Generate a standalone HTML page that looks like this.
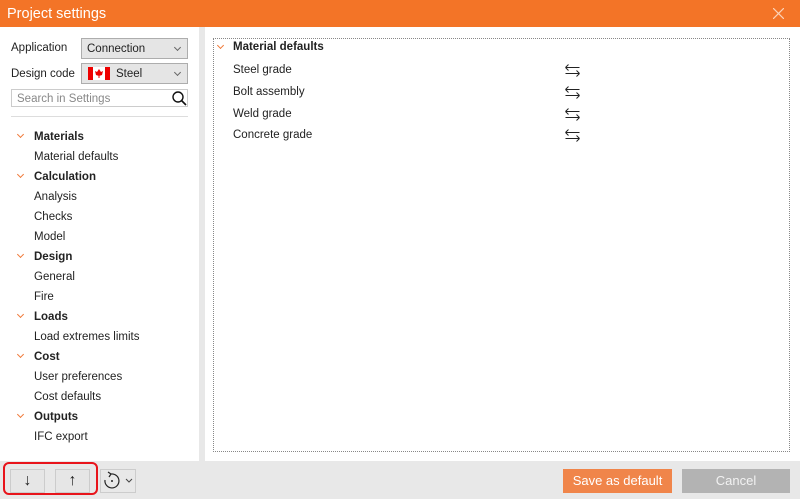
<!DOCTYPE html><html><head><style>
*{margin:0;padding:0;box-sizing:border-box}
body{width:800px;height:499px;overflow:hidden;font-family:"Liberation Sans",sans-serif;font-size:11.5px;color:#222;background:#e8e8e8;position:relative}
.a{position:absolute}
.title{left:0;top:0;width:800px;height:27px;background:#f37427;color:#fff;font-size:14.5px;padding:6px 0 0 7px}
.dd{background:#e5e5e5;border:1px solid #adadad;height:21px;padding:4px 0 0 5px}
.dd:after{content:"";position:absolute;right:7px;top:6px;width:4px;height:4px;border-right:1px solid #666;border-bottom:1px solid #666;transform:rotate(45deg)}
.chev{position:absolute;left:18px;width:5px;height:5px;border-right:1px solid #f07a3a;border-bottom:1px solid #f07a3a;transform:rotate(45deg)}
.b{font-weight:bold}
.btn{border:1px solid #ccc;background:#e6e6e6;height:24px;text-align:center;font-size:16px;line-height:22px}
</style></head><body>
<div class="a title">Project settings</div>
<svg class="a" style="left:773px;top:8px" width="11" height="11"><path d="M0 0L11 11M11 0L0 11" stroke="#fbd3b8" stroke-width="1.2"/></svg>
<div class="a" style="left:0;top:27px;width:199px;height:434px;background:#fff"></div>
<div class="a" style="left:205px;top:27px;width:595px;height:434px;background:#fff"></div>
<div class="a" style="left:11px;top:42px">Application</div>
<div class="a dd" style="left:81px;top:38px;width:107px">Connection</div>
<div class="a" style="left:11px;top:68px">Design code</div>
<div class="a dd" style="left:81px;top:63px;width:107px;padding-left:34px">Steel</div>
<svg class="a" style="left:88px;top:67px" width="22" height="13"><rect width="22" height="13" fill="#fff"/><rect width="5" height="13" fill="#e00"/><rect x="17" width="5" height="13" fill="#e00"/><path d="M11 2L13 5L15 4L14 8L11 9L8 8L7 4L9 5Z" fill="#e00"/><path d="M11 9V11" stroke="#e00"/></svg>
<div class="a" style="left:11px;top:89px;width:177px;height:18px;border:1px solid #ccc;color:#888;padding:3px 0 0 5px">Search in Settings</div>
<svg class="a" style="left:171px;top:90px" width="16" height="16"><circle cx="7" cy="7" r="5" fill="none" stroke="#111" stroke-width="1.4"/><path d="M10.5 10.5L15 15" stroke="#111" stroke-width="1.6"/></svg>
<div class="a" style="left:11px;top:116px;width:177px;height:1px;background:#ddd"></div>
<div class="a" style="left:0;top:131px;width:199px">
<div style="position:relative;height:20px"><i class="chev" style="top:1px"></i><span class="a b" style="left:34px;top:0">Materials</span></div>
<div style="position:relative;height:20px"><span class="a" style="left:34px">Material defaults</span></div>
<div style="position:relative;height:20px"><i class="chev" style="top:1px"></i><span class="a b" style="left:34px">Calculation</span></div>
<div style="position:relative;height:20px"><span class="a" style="left:34px">Analysis</span></div>
<div style="position:relative;height:20px"><span class="a" style="left:34px">Checks</span></div>
<div style="position:relative;height:20px"><span class="a" style="left:34px">Model</span></div>
<div style="position:relative;height:20px"><i class="chev" style="top:1px"></i><span class="a b" style="left:34px">Design</span></div>
<div style="position:relative;height:20px"><span class="a" style="left:34px">General</span></div>
<div style="position:relative;height:20px"><span class="a" style="left:34px">Fire</span></div>
<div style="position:relative;height:20px"><i class="chev" style="top:1px"></i><span class="a b" style="left:34px">Loads</span></div>
<div style="position:relative;height:20px"><span class="a" style="left:34px">Load extremes limits</span></div>
<div style="position:relative;height:20px"><i class="chev" style="top:1px"></i><span class="a b" style="left:34px">Cost</span></div>
<div style="position:relative;height:20px"><span class="a" style="left:34px">User preferences</span></div>
<div style="position:relative;height:20px"><span class="a" style="left:34px">Cost defaults</span></div>
<div style="position:relative;height:20px"><i class="chev" style="top:1px"></i><span class="a b" style="left:34px">Outputs</span></div>
<div style="position:relative;height:20px"><span class="a" style="left:34px">IFC export</span></div>
</div>
<div class="a" style="left:213px;top:38px;width:577px;height:414px;border:1px dotted #888"></div>
<i class="chev" style="left:218px;top:43px"></i>
<div class="a b" style="left:233px;top:41px">Material defaults</div>
<div class="a" style="left:233px;top:64px">Steel grade</div>
<div class="a" style="left:233px;top:86px">Bolt assembly</div>
<div class="a" style="left:233px;top:108px">Weld grade</div>
<div class="a" style="left:233px;top:129px">Concrete grade</div>
<svg class="a" style="left:564px;top:64px" width="17" height="80"><g stroke="#222" stroke-width="1" fill="none">
<path d="M1.5 3.5H15.5M1.5 3.5L4.5 0.5M1.5 3.5L4.5 6.5M1.5 9.5H15.5M15.5 9.5L12.5 6.5M15.5 9.5L12.5 12.5"/>
<path d="M1.5 25.5H15.5M1.5 25.5L4.5 22.5M1.5 25.5L4.5 28.5M1.5 31.5H15.5M15.5 31.5L12.5 28.5M15.5 31.5L12.5 34.5"/>
<path d="M1.5 47.5H15.5M1.5 47.5L4.5 44.5M1.5 47.5L4.5 50.5M1.5 53.5H15.5M15.5 53.5L12.5 50.5M15.5 53.5L12.5 56.5"/>
<path d="M1.5 68.5H15.5M1.5 68.5L4.5 65.5M1.5 68.5L4.5 71.5M1.5 74.5H15.5M15.5 74.5L12.5 71.5M15.5 74.5L12.5 77.5"/></g></svg>
<div class="a btn" style="left:10px;top:469px;width:35px">↓</div>
<div class="a btn" style="left:55px;top:469px;width:35px">↑</div>
<div class="a" style="left:3px;top:462px;width:95px;height:33px;border:2.5px solid #e8141b;border-radius:6px"></div>
<div class="a" style="left:100px;top:469px;width:36px;height:24px;border:1px solid #ccc"></div>
<svg class="a" style="left:102px;top:471px" width="34" height="20"><path d="M9 3A7 7 0 1 1 3 9" fill="none" stroke="#222" stroke-width="1.2"/><path d="M6 1L9 3L7 6" fill="none" stroke="#222" stroke-width="1.2"/><circle cx="10" cy="10" r="1" fill="#222"/><path d="M24 8L27 11L30 8" fill="none" stroke="#444"/></svg>
<div class="a" style="left:563px;top:469px;width:109px;height:24px;background:#f0854a;color:#fff;font-size:13px;text-align:center;line-height:24px">Save as default</div>
<div class="a" style="left:682px;top:469px;width:108px;height:24px;background:#b3b3b3;color:#f2f2f2;font-size:13px;text-align:center;line-height:24px">Cancel</div>
</body></html>
